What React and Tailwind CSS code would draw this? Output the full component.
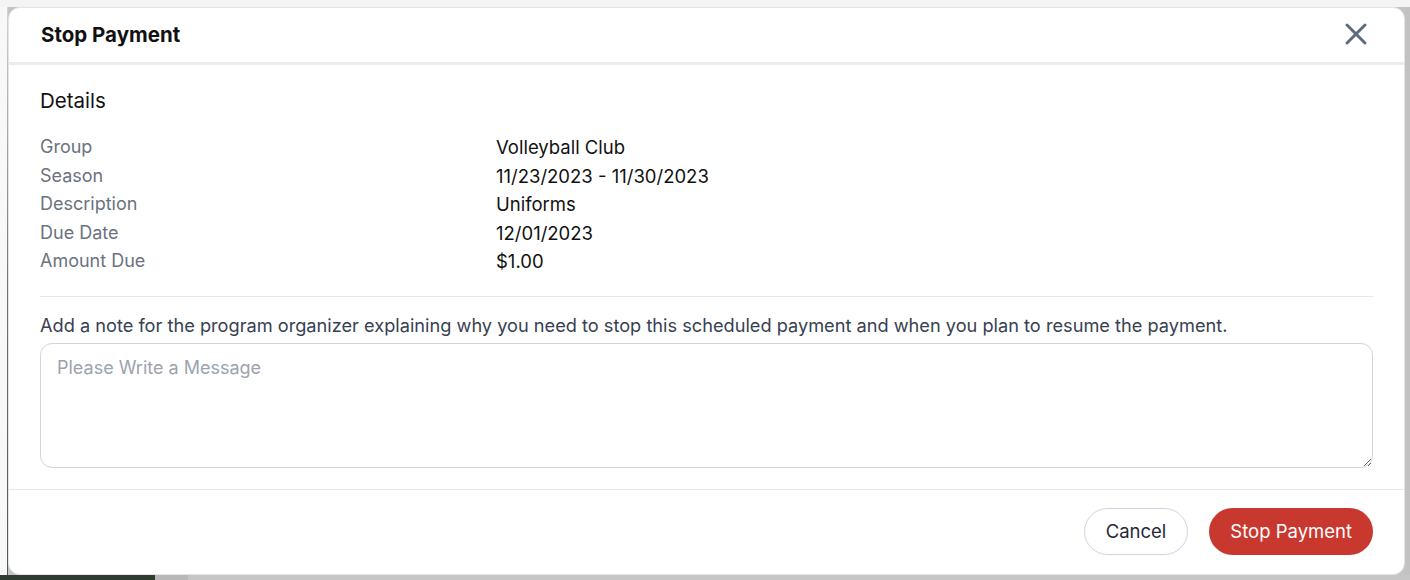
import { X } from 'lucide-react';

const details = [
  { label: 'Group', value: 'Volleyball Club' },
  { label: 'Season', value: '11/23/2023 - 11/30/2023' },
  { label: 'Description', value: 'Uniforms' },
  { label: 'Due Date', value: '12/01/2023' },
  { label: 'Amount Due', value: '$1.00' },
];

export default function App() {
  return (
    <div className="flex h-[580px] w-full flex-col overflow-hidden bg-[#c4c4c4] font-['Inter',sans-serif]">
      <div className="h-[7px] shrink-0 bg-[#f4f4f4]" />
      <div className="flex min-h-0 flex-1">
        <div className="w-[7px] shrink-0 bg-[#f8f8f8]" />
        <div className="w-px shrink-0 bg-gradient-to-b from-[#d4d4d4] via-[#6b7570] to-[#4f5a55]" />
        <div className="flex w-[1397px] shrink-0 flex-col overflow-hidden rounded-[12px] border border-[#e4e4e4] bg-white">
          <div className="flex h-[57px] shrink-0 items-center justify-between border-b-[3px] border-[#ececec] pl-[32px] pr-[30px]">
            <h1 className="text-[20.5px] font-bold text-[#111111]">Stop Payment</h1>
            <button type="button" className="-mt-[3px] flex items-center justify-center text-[#5f6b7c]">
              <X size={36} strokeWidth={2} />
            </button>
          </div>

          <div className="flex flex-1 flex-col border-b border-[#e8e8e8] pl-[31px] pr-[31px] pt-[22px]">
            <h2 className="text-[20.5px] leading-[28px] text-[#111111]">Details</h2>
            <dl className="mt-[18px] grid grid-cols-[456px_1fr] text-[18px] leading-[28.5px]">
              {details.map((row) => (
                <div key={row.label} className="contents">
                  <dt className="text-[#6b7280]">{row.label}</dt>
                  <dd className="text-[18.5px] text-[#111111]">{row.value}</dd>
                </div>
              ))}
            </dl>
            <div className="mt-[20px] border-t border-[#e5e7eb]" />
            <p className="mt-[14px] text-[18.2px] leading-[28px] text-[#374151]">
              Add a note for the program organizer explaining why you need to stop this scheduled payment and when you plan to resume the payment.
            </p>
            <textarea
              placeholder="Please Write a Message"
              className="mt-[4px] h-[125px] w-full rounded-[12px] border border-[#cfd6e0] px-[16px] py-[10px] text-[18px] text-[#111111] placeholder:text-[#9ca3af] focus:outline-none"
            />
          </div>

          <div className="flex h-[84px] shrink-0 items-start justify-end gap-[21px] pr-[31px] pt-[18px]">
            <button
              type="button"
              className="h-[47px] rounded-full border border-[#cbd5e1] bg-white px-[21px] text-[18.5px] text-[#1f2937]"
            >
              Cancel
            </button>
            <button
              type="button"
              className="h-[47px] rounded-full bg-[#c9382f] px-[21px] text-[18.5px] text-white"
            >
              Stop Payment
            </button>
          </div>
        </div>
        <div className="flex-1 bg-[#c2c2c2]" />
      </div>
      <div className="flex h-[5px] shrink-0">
        <div className="w-[155px] bg-[#2f3d31]" />
        <div className="w-[33px] bg-[#b8b8b8]" />
        <div className="flex-1 bg-[#c6c6c6]" />
      </div>
    </div>
  );
}
